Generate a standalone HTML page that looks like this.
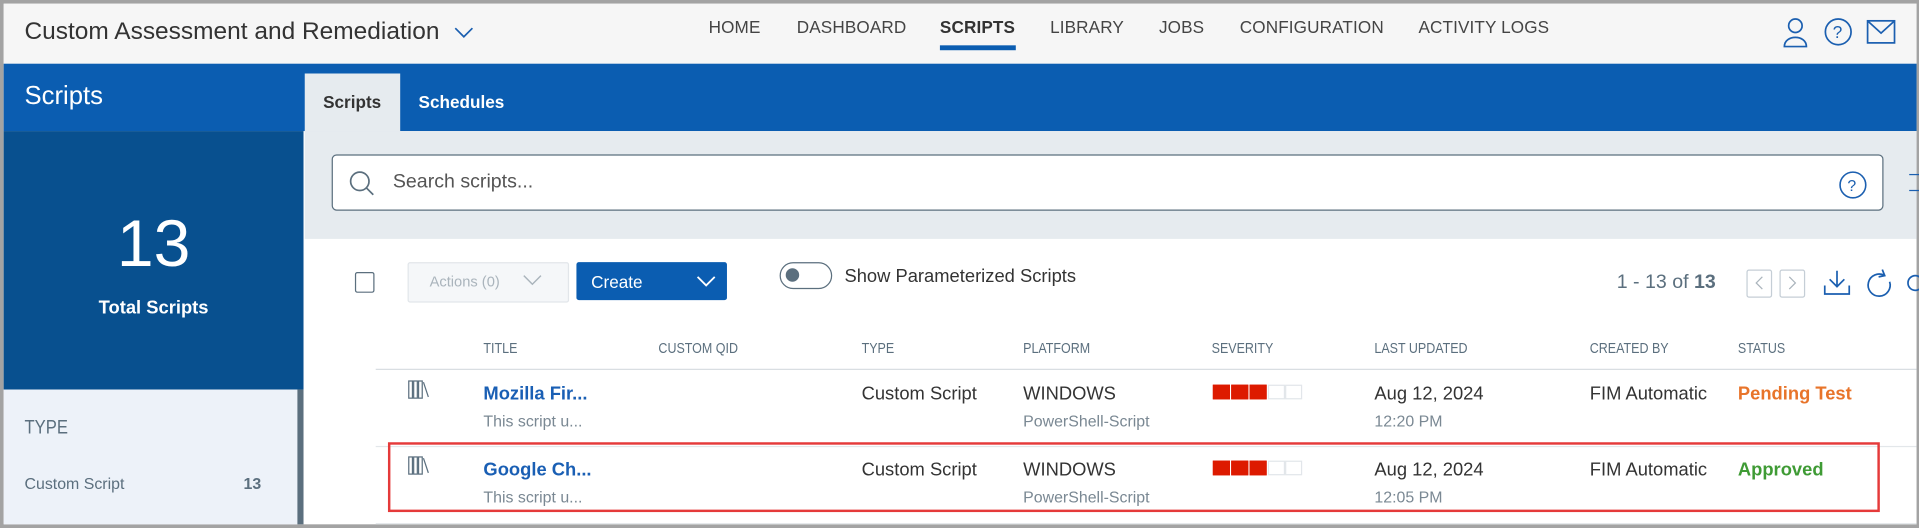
<!DOCTYPE html>
<html><head><meta charset="utf-8">
<style>
html,body{margin:0;padding:0;width:1919px;height:528px;overflow:hidden;background:#a3a3a3;}
#w{position:absolute;left:0;top:0;width:1568px;height:431px;transform:scale(1.22385,1.22506);transform-origin:0 0;font-family:"Liberation Sans",sans-serif;}
.a{position:absolute;white-space:nowrap;}
.nav{font-size:14px;color:#444;top:14px;letter-spacing:0.1px}
.th{font-size:12px;color:#5b6f7e;top:277px;transform:scaleX(0.85);transform-origin:0 0}
.c{font-size:15px;color:#333;}
.s{font-size:13px;color:#7a8893;}
.bar{position:absolute;box-sizing:border-box;width:14px;height:12px;border:1px solid #e2e6ea;background:#fff}
.r{background:#dd1a00;border-color:#dd1a00}
</style></head><body>
<div id="w">
<div class="a" style="left:3px;top:3px;width:1563px;height:425px;background:#fff"></div>
<div class="a" style="left:3px;top:3px;width:1563px;height:49px;background:#f6f6f6"></div>
<div class="a" style="left:20px;top:15px;font-size:20px;color:#333">Custom Assessment and Remediation</div>
<svg class="a" style="left:371px;top:20px" width="16" height="12"><path d="M1 3 L8 10 L15 3" fill="none" stroke="#1b5fb0" stroke-width="1.4"/></svg>
<div class="a nav" style="left:579px">HOME</div>
<div class="a nav" style="left:651px">DASHBOARD</div>
<div class="a nav" style="left:768px;font-weight:bold;color:#333">SCRIPTS</div>
<div class="a" style="left:768px;top:37px;width:62px;height:4px;background:#0b5db1"></div>
<div class="a nav" style="left:858px">LIBRARY</div>
<div class="a nav" style="left:947px">JOBS</div>
<div class="a nav" style="left:1013px">CONFIGURATION</div>
<div class="a nav" style="left:1159px">ACTIVITY LOGS</div>
<svg class="a" style="left:1456px;top:14px" width="100" height="26" fill="none" stroke="#1b5fb0" stroke-width="1.4">
<circle cx="11" cy="7" r="5.5"/><path d="M2 24 C2 14 20 14 20 24 Z"/>
<circle cx="46" cy="12" r="10.5"/><text x="41.5" y="17" font-size="14" fill="#1b5fb0" stroke="none" font-family="Liberation Sans">?</text>
<rect x="70" y="3" width="22" height="18"/><path d="M70 3 L81 13 L92 3"/>
</svg>
<div class="a" style="left:3px;top:52px;width:1563px;height:55px;background:#0b5db1"></div>
<div class="a" style="left:20px;top:67px;font-size:21px;color:#fff">Scripts</div>
<div class="a" style="left:249px;top:60px;width:78px;height:47px;background:#e6ebef"></div>
<div class="a" style="left:264px;top:75px;font-size:14px;font-weight:bold;color:#333">Scripts</div>
<div class="a" style="left:342px;top:75px;font-size:14px;font-weight:bold;color:#fff">Schedules</div>
<div class="a" style="left:3px;top:107px;width:245px;height:211px;background:#08508f"></div>
<div class="a" style="left:3px;top:168px;width:245px;text-align:center;font-size:54px;color:#fff">13</div>
<div class="a" style="left:3px;top:243px;width:245px;text-align:center;font-size:15px;font-weight:bold;color:#fff">Total Scripts</div>
<div class="a" style="left:3px;top:318px;width:240px;height:110px;background:#edf2f9"></div>
<div class="a" style="left:243px;top:318px;width:5px;height:110px;background:#5b6f7e"></div>
<div class="a" style="left:20px;top:341px;font-size:16px;color:#5b6f7e;transform:scaleX(0.85);transform-origin:0 0">TYPE</div>
<div class="a" style="left:20px;top:387px;font-size:13px;color:#5b6f7e">Custom Script</div>
<div class="a" style="left:199px;top:387px;font-size:13px;font-weight:bold;color:#5b6f7e">13</div>
<div class="a" style="left:249px;top:107px;width:1317px;height:88px;background:#e6ebef"></div>
<div class="a" style="left:271px;top:126px;width:1266px;height:44px;background:#fff;border:1px solid #5b6f7e;border-radius:4px"></div>
<svg class="a" style="left:284px;top:138px" width="24" height="24" fill="none" stroke="#5b6f7e" stroke-width="1.4"><circle cx="10" cy="10" r="7.5"/><path d="M15.5 15.5 L21 21"/></svg>
<div class="a" style="left:321px;top:140px;font-size:16px;color:#555">Search scripts...</div>
<svg class="a" style="left:1502px;top:139px" width="24" height="24" fill="none" stroke="#1b5fb0" stroke-width="1.3"><circle cx="12" cy="12" r="10.5"/><text x="7.5" y="17" font-size="13" fill="#1b5fb0" stroke="none" font-family="Liberation Sans">?</text></svg>
<div class="a" style="left:1560px;top:142px;width:8px;height:12px;border-top:1.5px solid #1b5fb0;border-bottom:1.5px solid #1b5fb0"></div>
<div class="a" style="left:290px;top:222px;width:14px;height:15px;border:1px solid #5b6f7e;border-radius:2px"></div>
<div class="a" style="left:333px;top:214px;width:130px;height:31px;background:#f5f7f9;border:1px solid #e2e6ea;border-radius:2px"></div>
<div class="a" style="left:351px;top:223px;font-size:12px;color:#aab4bc">Actions (0)</div>
<svg class="a" style="left:427px;top:224px" width="16" height="10"><path d="M1 1 L8 8 L15 1" fill="none" stroke="#aab4bc" stroke-width="1.2"/></svg>
<div class="a" style="left:471px;top:214px;width:123px;height:31px;background:#0b5db1;border-radius:2px"></div>
<div class="a" style="left:483px;top:222px;font-size:14px;color:#fff">Create</div>
<svg class="a" style="left:569px;top:225px" width="16" height="10"><path d="M1 1 L8 8 L15 1" fill="none" stroke="#fff" stroke-width="1.5"/></svg>
<div class="a" style="left:637px;top:214px;width:41px;height:20px;border:1.5px solid #5b6f7e;border-radius:11px"></div>
<div class="a" style="left:642px;top:219px;width:11px;height:11px;border-radius:6px;background:#5b6f7e"></div>
<div class="a" style="left:690px;top:217px;font-size:15px;color:#333">Show Parameterized Scripts</div>
<div class="a" style="left:1321px;top:222px;font-size:16px;color:#5b6f7e">1 - 13 of <b>13</b></div>
<div class="a" style="left:1427px;top:220px;width:19px;height:21px;border:1px solid #c5ced6;border-radius:2px"></div>
<div class="a" style="left:1454px;top:220px;width:19px;height:21px;border:1px solid #c5ced6;border-radius:2px"></div>
<svg class="a" style="left:1427px;top:220px" width="50" height="22" fill="none" stroke="#aab4bc" stroke-width="1"><path d="M13 6 L8 11 L13 16"/><path d="M35 6 L40 11 L35 16"/></svg>
<svg class="a" style="left:1489px;top:218px" width="80" height="26" fill="none" stroke="#1b5fb0" stroke-width="1.4">
<path d="M12 3 V16 M6 10 L12 16 L18 10 M2 15 V22 H22 V15"/>
<path d="M51 7 A9 9 0 1 0 55 12 M49 2 L51 7 L46 8"/>
<circle cx="76" cy="13" r="6"/>
</svg>
<div class="a th" style="left:395px">TITLE</div>
<div class="a th" style="left:538px">CUSTOM QID</div>
<div class="a th" style="left:704px">TYPE</div>
<div class="a th" style="left:836px">PLATFORM</div>
<div class="a th" style="left:990px">SEVERITY</div>
<div class="a th" style="left:1123px">LAST UPDATED</div>
<div class="a th" style="left:1299px">CREATED BY</div>
<div class="a th" style="left:1420px">STATUS</div>
<div class="a" style="left:307px;top:301px;width:1259px;height:1px;background:#d8dde2"></div>
<div class="a" style="left:307px;top:364px;width:1259px;height:1px;background:#e3e7ea"></div>
<div class="a" style="left:307px;top:427px;width:1259px;height:1px;background:#e3e7ea"></div>

<svg class="a" style="left:333px;top:310px" width="20" height="18" fill="none" stroke="#5b6f7e" stroke-width="1"><rect x="1" y="1" width="3" height="14"/><rect x="5" y="1" width="3" height="14"/><rect x="9" y="1" width="3" height="14"/><path d="M13 2 L17 14"/></svg>
<div class="a" style="left:395px;top:313px;font-size:15px;font-weight:bold;color:#1a5fb4">Mozilla Fir...</div>
<div class="a s" style="left:395px;top:336px">This script u...</div>
<div class="a c" style="left:704px;top:313px">Custom Script</div>
<div class="a c" style="left:836px;top:313px">WINDOWS</div>
<div class="a s" style="left:836px;top:336px">PowerShell-Script</div>
<div class="bar r" style="left:991px;top:314px"></div><div class="bar r" style="left:1006px;top:314px"></div><div class="bar r" style="left:1021px;top:314px"></div><div class="bar" style="left:1036px;top:314px"></div><div class="bar" style="left:1050px;top:314px"></div>
<div class="a c" style="left:1123px;top:313px">Aug 12, 2024</div>
<div class="a s" style="left:1123px;top:336px">12:20 PM</div>
<div class="a c" style="left:1299px;top:313px;width:108px;overflow:hidden">FIM Automatic</div>
<div class="a" style="left:1420px;top:313px;font-size:15px;font-weight:bold;color:#e8742a">Pending Test</div>

<svg class="a" style="left:333px;top:372px" width="20" height="18" fill="none" stroke="#5b6f7e" stroke-width="1"><rect x="1" y="1" width="3" height="14"/><rect x="5" y="1" width="3" height="14"/><rect x="9" y="1" width="3" height="14"/><path d="M13 2 L17 14"/></svg>
<div class="a" style="left:395px;top:375px;font-size:15px;font-weight:bold;color:#1a5fb4">Google Ch...</div>
<div class="a s" style="left:395px;top:398px">This script u...</div>
<div class="a c" style="left:704px;top:375px">Custom Script</div>
<div class="a c" style="left:836px;top:375px">WINDOWS</div>
<div class="a s" style="left:836px;top:398px">PowerShell-Script</div>
<div class="bar r" style="left:991px;top:376px"></div><div class="bar r" style="left:1006px;top:376px"></div><div class="bar r" style="left:1021px;top:376px"></div><div class="bar" style="left:1036px;top:376px"></div><div class="bar" style="left:1050px;top:376px"></div>
<div class="a c" style="left:1123px;top:375px">Aug 12, 2024</div>
<div class="a s" style="left:1123px;top:398px">12:05 PM</div>
<div class="a c" style="left:1299px;top:375px;width:108px;overflow:hidden">FIM Automatic</div>
<div class="a" style="left:1420px;top:375px;font-size:15px;font-weight:bold;color:#3f9b35">Approved</div>
<div class="a" style="left:317px;top:361px;width:1215px;height:53px;border:2px solid #e53a3a"></div>
</div>
</body></html>
